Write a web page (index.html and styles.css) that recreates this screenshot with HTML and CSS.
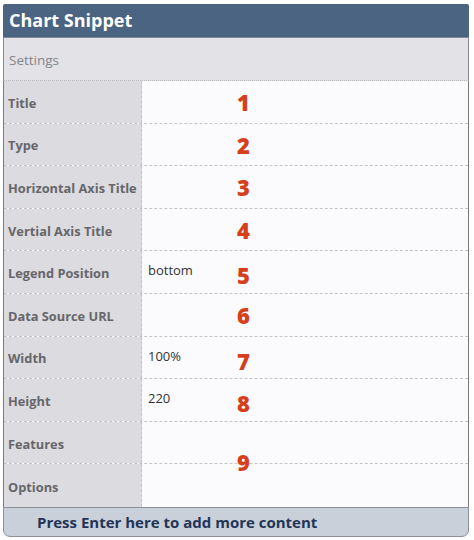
FILE: index.html
```html
<!DOCTYPE html>
<html>
<head>
<meta charset="utf-8">
<link rel="stylesheet" href="styles.css">
</head>
<body>
<div class="panel">
  <div class="header">Chart Snippet</div>
  <div class="settings">Settings</div>
  <div class="rows">
    <div class="row"><div class="label">Title</div><div class="value"><span class="num">1</span></div></div>
    <div class="row"><div class="label">Type</div><div class="value"><span class="num">2</span></div></div>
    <div class="row"><div class="label">Horizontal Axis Title</div><div class="value"><span class="num">3</span></div></div>
    <div class="row"><div class="label">Vertial Axis Title</div><div class="value"><span class="num">4</span></div></div>
    <div class="row"><div class="label">Legend Position</div><div class="value">bottom<span class="num n5">5</span></div></div>
    <div class="row"><div class="label">Data Source URL</div><div class="value"><span class="num">6</span></div></div>
    <div class="row"><div class="label">Width</div><div class="value">100%<span class="num n5">7</span></div></div>
    <div class="row"><div class="label">Height</div><div class="value">220<span class="num n5">8</span></div></div>
    <div class="row"><div class="label">Features</div><div class="value"><span class="num n9">9</span></div></div>
    <div class="row last"><div class="label">Options</div><div class="value"></div></div>
  </div>
  <div class="footer">Press Enter here to add more content</div>
</div>
</body>
</html>
```
FILE: styles.css
```css
html, body {
  margin: 0;
  padding: 0;
  background: #ffffff;
}
body {
  padding: 4px 5px 0 3px;
  font-family: "Open Sans", "Liberation Sans", sans-serif;
}
.panel {
  width: 466px;
  box-sizing: border-box;
}
.header {
  height: 34px;
  background: #4a6482;
  color: #ffffff;
  font-weight: 700;
  font-size: 18px;
  line-height: 33px;
  padding-left: 6px;
  border-radius: 2px 2px 0 0;
  box-sizing: border-box;
  border-bottom: 1px solid #7f8a99;
}
.settings {
  height: 43px;
  background: #e3e2e7;
  color: #85858a;
  font-size: 13.5px;
  line-height: 44px;
  padding-left: 5px;
  border-left: 1px solid #8a8a8a;
  border-right: 1px solid #8a8a8a;
  border-bottom: 1px dotted #b8b8bc;
  box-sizing: border-box;
}
.rows {
  border-left: 1px solid #7a7a7a;
  border-right: 1px solid #7a7a7a;
}
.row {
  display: flex;
  height: 42.6px;
  box-sizing: border-box;
  border-bottom: 1px dashed #c4c4c8;
}
.row.last {
  border-bottom: none;
}
.label {
  width: 138px;
  flex: none;
  background: #dcdbe0;
  color: #66666a;
  font-weight: 700;
  font-size: 12.8px;
  display: flex;
  align-items: center;
  padding: 2px 0 0 4px;
  box-sizing: border-box;
  border-right: 1px dashed #c4c4c8;
}
.value {
  flex: 1;
  position: relative;
  background: #fbfbfd;
  color: #333333;
  font-size: 13px;
  padding: 10px 0 0 6px;
  box-sizing: border-box;
}
.num {
  position: absolute;
  z-index: 2;
  left: 95px;
  top: 6px;
  color: #d63f1c;
  font-weight: 800;
  font-size: 22px;
  line-height: 30px;
}
.num.n5 {
  top: 9px;
}
.num.n9 {
  top: 25px;
}
.footer {
  height: 30px;
  background: #c9d0da;
  color: #233556;
  font-weight: 700;
  font-size: 15px;
  line-height: 29px;
  padding-left: 33px;
  border: 1px solid #8a8f98;
  border-radius: 0 0 7px 7px;
  box-sizing: border-box;
}
```
